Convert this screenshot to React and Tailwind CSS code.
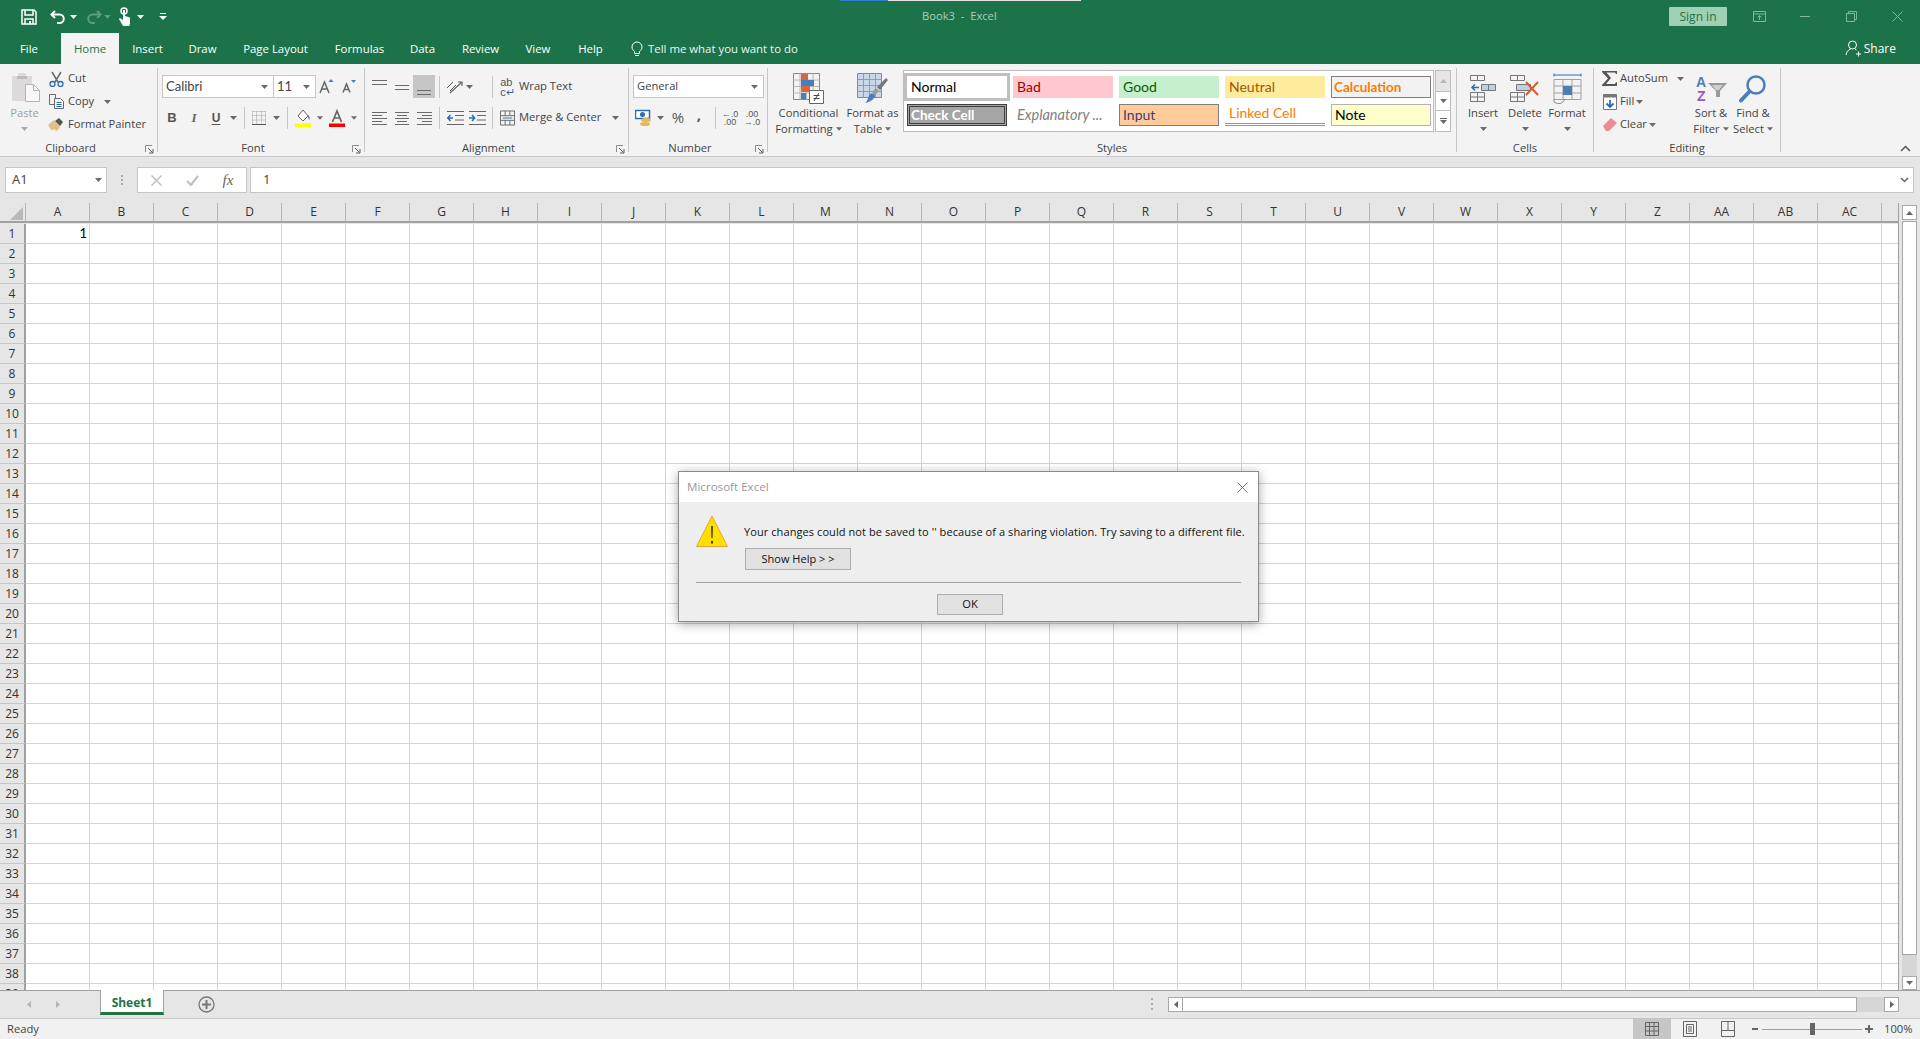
import React from 'react';

const COLUMNS = ['A','B','C','D','E','F','G','H','I','J','K','L','M','N','O','P','Q','R','S','T','U','V','W','X','Y','Z','AA','AB','AC'];
const ROWS = Array.from({ length: 39 }, (_, i) => i + 1);

const Caret = ({ className = 'w-[7px]', color = '#6a6a6a' }) => (
  <span className={`flex justify-center shrink-0 ${className}`}>
    <svg width="7" height="4" viewBox="0 0 7 4"><path d="M0 0h7L3.500 4z" fill={color} /></svg>
  </span>
);

const Cell = ({ className = 'w-[22px]', children }) => (
  <span className={`flex justify-center items-center shrink-0 ${className}`}>{children}</span>
);

const Sep = ({ className = '' }) => <span className={`w-px h-[22px] bg-[#c6c6c6] shrink-0 ${className}`} />;

const Launcher = () => (
  <svg width="9" height="9" viewBox="0 0 9 9" className="absolute right-[3px] top-[5px]">
    <path d="M.5 7V.500H7" fill="none" stroke="#8a8a8a" />
    <path d="M3 3l4.500 4.500M8 4v4H4" fill="none" stroke="#5a5a5a" />
  </svg>
);

const Group = ({ label, className, launcher, children }) => (
  <div className={`relative shrink-0 pt-1 ${className}`}>
    <div className="h-[84px] flex flex-col border-r border-[#c6c6c6]">
      <div className="h-[72px] flex shrink-0">{children}</div>
      <div className={`relative h-[16px] shrink-0 leading-[16px] text-center text-[#444] ${launcher ? 'pr-[16px]' : ''}`}>
        {label}
        {launcher && <Launcher />}
      </div>
    </div>
  </div>
);

const SmallRow = ({ className = '', children }) => <div className={`flex items-center h-[23px] ${className}`}>{children}</div>;

const Big = ({ className = 'w-[42px]', icon, lines, caretInline = true }) => (
  <div className={`flex flex-col items-center shrink-0 ${className}`}>
    <div className="h-[37px] flex items-center justify-center pt-[4px]">{icon}</div>
    {lines.map((l, i) => (
      <div key={i} className="h-[16px] leading-[16px] whitespace-nowrap flex items-center gap-[3px] text-[#444]">
        {l}
        {i === lines.length - 1 && caretInline && <Caret className="w-[6px]" />}
      </div>
    ))}
    {!caretInline && <div className="h-[16px] flex items-center"><Caret /></div>}
  </div>
);

const Select = ({ className, label, font = "font-['Lato',sans-serif] text-[13px]" }) => (
  <div className={`h-[23px] bg-white border border-[#c6c6c6] flex items-center justify-between pl-[3px] pr-[5px] shrink-0 ${className}`}>
    <span className={`text-[#444] ${font}`}>{label}</span>
    <Caret />
  </div>
);

const AlignIcon = ({ rows }) => (
  <svg width="18" height="16" viewBox="0 0 18 16">
    {rows.map(([x1, x2, y], i) => <path key={i} d={`M${x1} ${y + .5}H${x2}`} stroke="#6a6a6a" />)}
  </svg>
);

const StyleCell = ({ className, children }) => (
  <div className={`h-[22px] w-[100px] flex items-center pb-[1px] leading-[16px] font-['Lato',sans-serif] whitespace-nowrap ${className}`}>{children}</div>
);

const TitleBar = () => (
  <div className="relative h-[33px] flex items-center text-white shrink-0">
    <Cell className="w-[22px] ml-[18px]">
      <svg width="16" height="16" viewBox="0 0 16 16" fill="none" stroke="#fff" strokeWidth="1.500">
        <path d="M1 1h12l2 2v12H1z" /><path d="M4 1v5h8V1M4 15v-5h8v5" /><path d="M8 12h2v3H8z" fill="#fff" stroke="none" />
      </svg>
    </Cell>
    <Cell className="w-[18px] ml-[9px]">
      <svg width="16" height="16" viewBox="0 0 16 16" fill="none" stroke="#fff" strokeWidth="2">
        <path d="M5 2L1.500 5.500 5 9" /><path d="M2 5.500h7.500a3.800 3.800 0 0 1 0 8.500H7" />
      </svg>
    </Cell>
    <Caret className="w-[7px] ml-[3px]" color="#fff" />
    <Cell className="w-[18px] ml-[8px]">
      <svg width="16" height="16" viewBox="0 0 16 16" fill="none" stroke="#5c9e7c" strokeWidth="2">
        <path d="M11 2l3.500 3.500L11 9" /><path d="M14 5.500H6.500a3.800 3.800 0 0 0 0 8.500H9" />
      </svg>
    </Cell>
    <Caret className="w-[7px] ml-[1px]" color="#5c9e7c" />
    <Cell className="w-[18px] ml-[5px]">
      <svg width="14" height="20" viewBox="0 0 14 20">
        <circle cx="6" cy="4" r="3" fill="none" stroke="#fff" strokeWidth="1.500" />
        <path d="M5 3h2v6l5 1.500V17l-1 2H5L1 12l1-1 3 2z" fill="#fff" />
      </svg>
    </Cell>
    <Caret className="w-[7px] ml-[3px]" color="#fff" />
    <Cell className="w-[10px] ml-[14px]">
      <svg width="8" height="8" viewBox="0 0 8 8" fill="#fff"><path d="M1 0h6v1H1zM0 3h8L4 7z" /></svg>
    </Cell>
    <div className="absolute left-[840px] top-0 h-[1px] w-[48px] bg-[#2b7cd3]" />
    <div className="absolute left-[888px] top-0 h-[1px] w-[193px] bg-[#e6e6e6]" />
    <span className="ml-[754px] text-[#a9d0bb] whitespace-nowrap">Book3&nbsp; -&nbsp; Excel</span>
    <div className="ml-auto flex items-center">
      <div className="w-[58px] h-[19px] rounded-[1px] bg-[#9fcfb4] text-[#1f7246] text-[12px] flex items-center justify-center mr-[20px]">Sign in</div>
      <Cell className="w-[24px] mr-[22px]">
        <svg width="13" height="11" viewBox="0 0 13 11" fill="none" stroke="#7fb89a"><path d="M.500.500h12v10H.500zM.500 3h12M6.500 9V5M4.500 6.500l2-2 2 2" /></svg>
      </Cell>
      <Cell className="w-[24px] mr-[22px]"><span className="w-[10px] h-px bg-[#7fb89a]" /></Cell>
      <Cell className="w-[24px] mr-[22px]">
        <svg width="11" height="11" viewBox="0 0 11 11" fill="none" stroke="#7fb89a"><path d="M.500 2.500h8v8h-8zM2.500 2.500v-2h8v8h-2" /></svg>
      </Cell>
      <Cell className="w-[24px] mr-[11px]">
        <svg width="11" height="11" viewBox="0 0 11 11" fill="none" stroke="#7fb89a"><path d="M.500.500l10 10M10.500.500l-10 10" /></svg>
      </Cell>
    </div>
  </div>
);

const Tabs = () => {
  const tabs = [['File', 'w-[61px] pr-[3px]'], ['Home', 'w-[58px]'], ['Insert', 'w-[56px] pl-[1px]'], ['Draw', 'w-[54px] pl-[1px]'], ['Page Layout', 'w-[92px] pl-[1px]'], ['Formulas', 'w-[77px]'], ['Data', 'w-[49px]'], ['Review', 'w-[67px]'], ['View', 'w-[48px]'], ['Help', 'w-[57px]']];
  return (
    <div className="h-[31px] flex items-stretch text-white text-[11.400px] shrink-0">
      {tabs.map(([t, w]) => (
        <div key={t} className={`flex items-center justify-center ${w} ${t === 'Home' ? 'bg-[#f3f3f3] text-[#217346]' : ''}`}>{t}</div>
      ))}
      <div className="flex items-center ml-[12px] gap-[5px] text-[#eef6f1]">
        <svg width="12" height="16" viewBox="0 0 12 16" fill="none" stroke="#fff"><path d="M3.500 10.500C2 9 1 8 1 6a5 5 0 0 1 10 0c0 2-1 3-2.500 4.500v2h-5zM4 14.500h4" /></svg>
        <span>Tell me what you want to do</span>
      </div>
      <div className="ml-auto flex items-center mr-[24px]">
        <svg width="17" height="17" viewBox="0 0 17 17" fill="none" stroke="#fff" className="mr-[2px]">
          <circle cx="7.500" cy="5" r="4" /><path d="M1 15c.500-3 2-5 4.500-6M10 9c.500.200 1 .500 1.500.900M11 14h5M13.500 11.500v5" />
        </svg>
        <span className="text-[12px]">Share</span>
      </div>
    </div>
  );
};

const Ribbon = () => (
  <div className="relative h-[93px] bg-[#f3f3f3] border-b border-[#c6c6c6] flex shrink-0 text-[#444]">
    <Group label="Clipboard" className="w-[158px]" launcher>
      <div className="w-[46px] flex flex-col items-center pt-[4px] pl-[3px] text-[#a0a0a0] shrink-0">
        <svg width="30" height="30" viewBox="0 0 30 30" className="ml-[2px]">
          <path d="M1 4h6V1h8v3h6v25H1z" fill="#dcdadb" /><path d="M6 4h10v3H6z" fill="#bdbbbc" />
          <path d="M14.500 12.500h8l6 6v11h-14z" fill="#f8f8f8" stroke="#b4b4b4" /><path d="M22.500 12.500v6h6" fill="none" stroke="#b4b4b4" />
        </svg>
        <div className="h-[16px] leading-[16px] mt-[3px]">Paste</div>
        <div className="h-[16px] flex items-center"><Caret color="#a8a8a8" /></div>
      </div>
      <div className="flex flex-col -mt-px">
        <SmallRow>
          <Cell className="w-[20px]">
            <svg width="15" height="16" viewBox="0 0 15 16" fill="none"><path d="M3 1l6 10M12 1L6 11" stroke="#6a6a6a" strokeWidth="1.500" /><circle cx="3.500" cy="13" r="2.500" stroke="#2b6cb0" strokeWidth="1.300" /><circle cx="11.500" cy="13" r="2.500" stroke="#2b6cb0" strokeWidth="1.300" /></svg>
          </Cell>
          <span className="ml-[2px]">Cut</span>
        </SmallRow>
        <SmallRow>
          <Cell className="w-[20px]">
            <svg width="15" height="15" viewBox="0 0 15 15" fill="none" stroke="#6a6a6a"><path d="M.500.500h6v10h-6z" /><path d="M5.500 4.500h6l3 3v7h-9z" fill="#f3f3f3" /><path d="M7.500 8.500h5M7.500 10.500h5M7.500 12.500h5" stroke="#2b6cb0" /></svg>
          </Cell>
          <span className="ml-[2px]">Copy</span>
          <Caret className="w-[7px] ml-[10px]" />
        </SmallRow>
        <SmallRow>
          <Cell className="w-[20px]">
            <svg width="16" height="15" viewBox="0 0 16 15"><path d="M0 8l6-5 6 7-3 4-4-2-1 2z" fill="#e3bd85" /><path d="M7 4l4-3 4 4-3 4z" fill="#555" /></svg>
          </Cell>
          <span className="ml-[2px] whitespace-nowrap">Format Painter</span>
        </SmallRow>
      </div>
    </Group>

    <Group label="Font" className="w-[207px]" launcher>
      <div className="flex flex-col pt-[7px]">
        <div className="flex items-center ml-[4px]">
          <Select className="w-[112px]" label="Calibri" />
          <Select className="w-[43px] -ml-px" label="11" />
          <Cell className="w-[20px] ml-[1px]">
            <svg width="16" height="15" viewBox="0 0 16 15"><path d="M1 14L5.500 3 10 14M2.800 10h5.400" fill="none" stroke="#666" strokeWidth="1.500" /><path d="M9.500 3L12 0l2.500 3z" fill="#4a7ebb" /></svg>
          </Cell>
          <Cell className="w-[22px] ml-[1px]">
            <svg width="15" height="13" viewBox="0 0 15 13"><path d="M1 12.500L4.500 4 8 12.500M2.500 9.500h4" fill="none" stroke="#666" strokeWidth="1.500" /><path d="M9 0h5l-2.500 3z" fill="#4a7ebb" /></svg>
          </Cell>
        </div>
        <div className="flex items-center h-[23px] mt-[8px] ml-[3px]">
          <Cell><span className="font-bold font-['Liberation_Sans',sans-serif] text-[13px] text-[#555]">B</span></Cell>
          <Cell><span className="italic font-bold font-['Liberation_Serif',serif] text-[13px] text-[#666]">I</span></Cell>
          <Cell><span className="font-bold underline underline-offset-2 font-['Liberation_Sans',sans-serif] text-[12px] text-[#555]">U</span></Cell>
          <Caret className="w-[12px]" />
          <Sep className="ml-[5px]" />
          <Cell className="w-[28px]">
            <svg width="14" height="14" viewBox="0 0 14 14" fill="none"><path d="M.500.500h13M.500 4.500h13M.500 9h13M.500.500v13M4.500.500v13M9.500.500v13M13.500.500v13" stroke="#a0a0a0" strokeDasharray="1 1" /><path d="M0 13.500h14" stroke="#555" /></svg>
          </Cell>
          <Caret />
          <Sep className="ml-[7px]" />
          <Cell className="w-[28px] ml-[1px]">
            <svg width="16" height="18" viewBox="0 0 16 18"><path d="M3 7l5-6 5 6-5 5z" fill="#fff" stroke="#666" /><path d="M13 6c1.500 1 2 3 1.500 5-1-1-1.500-3-1.500-5z" fill="#2b6cb0" /><path d="M0 14.500h16V18H0z" fill="#ffff00" /></svg>
          </Cell>
          <Caret className="w-[6px]" />
          <Cell className="w-[28px]">
            <svg width="16" height="18" viewBox="0 0 16 18"><path d="M3.500 13L8 2l4.500 11M5.200 9h5.600" fill="none" stroke="#666" strokeWidth="1.700" /><path d="M0 14.500h16V18H0z" fill="#ff0000" /></svg>
          </Cell>
          <Caret className="w-[6px]" />
        </div>
      </div>
    </Group>

    <Group label="Alignment" className="w-[264px]" launcher>
      <div className="flex flex-col pt-[7px] pl-[4px]">
        <div className="flex items-center h-[23px]">
          <Cell><AlignIcon rows={[[1, 16, 1], [1, 16, 5]]} /></Cell>
          <Cell><AlignIcon rows={[[2, 16, 6], [2, 16, 10]]} /></Cell>
          <Cell className="w-[22px] h-[23px] bg-[#c6c6c6]"><span className="pt-[3px]"><AlignIcon rows={[[2, 16, 10], [2, 16, 14]]} /></span></Cell>
          <Sep className="ml-[4px]" />
          <Cell className="w-[22px] ml-[4px]">
            <svg width="18" height="16" viewBox="0 0 18 16" fill="none" stroke="#555"><path d="M1 9l6-6M4 12l6-6" /><path d="M4 14L16 3M12 3h4v4" stroke="#666" strokeWidth="1.200" /></svg>
          </Cell>
          <Caret />
          <Sep className="ml-[19px]" />
          <Cell className="w-[15px] ml-[7px]">
            <span className="text-[11px] leading-[10px] text-[#555] font-['Liberation_Sans',sans-serif]">ab<br />c<span className="text-[#2b6cb0]">↵</span></span>
          </Cell>
          <span className="ml-[4px] whitespace-nowrap">Wrap Text</span>
        </div>
        <div className="flex items-center h-[23px] mt-[8px]">
          <Cell><AlignIcon rows={[[1, 16, 2], [1, 11, 5], [1, 16, 8], [1, 11, 11], [1, 16, 14]]} /></Cell>
          <Cell><AlignIcon rows={[[2, 16, 2], [4, 14, 5], [2, 16, 8], [4, 14, 11], [2, 16, 14]]} /></Cell>
          <Cell><AlignIcon rows={[[2, 17, 2], [7, 17, 5], [2, 17, 8], [7, 17, 11], [2, 17, 14]]} /></Cell>
          <Sep className="ml-[4px]" />
          <Cell className="w-[22px] ml-[4px]">
            <svg width="17" height="14" viewBox="0 0 17 14" fill="none"><path d="M0 .500h17M8 4.500h9M8 9h9M0 13.500h17" stroke="#666" /><path d="M6 7H1M3.500 4L.800 7l2.700 3" stroke="#2b6cb0" strokeWidth="1.500" /></svg>
          </Cell>
          <Cell>
            <svg width="17" height="14" viewBox="0 0 17 14" fill="none"><path d="M0 .500h17M8 4.500h9M8 9h9M0 13.500h17" stroke="#666" /><path d="M0 7h5M3 4l2.700 3L3 10" stroke="#2b6cb0" strokeWidth="1.500" /></svg>
          </Cell>
          <Sep className="ml-[4px]" />
          <Cell className="w-[15px] ml-[7px]">
            <svg width="16" height="16" viewBox="0 0 16 16" fill="none" stroke="#666"><path d="M.500.500h15v15H.500zM.500 5.500h15M.500 10.500h15M5.500 .500v5M10.500 .500v5M5.500 10.500v5M10.500 10.500v5" /><path d="M3 8h10" stroke="#2b6cb0" /></svg>
          </Cell>
          <span className="ml-[4px] w-[93px] whitespace-nowrap">Merge &amp; Center</span>
          <Caret />
        </div>
      </div>
    </Group>

    <Group label="Number" className="w-[139px]" launcher>
      <div className="flex flex-col pt-[7px] pl-[4px]">
        <Select className="w-[131px]" label="General" font="text-[11.200px]" />
        <div className="flex items-center h-[23px] mt-[8px]">
          <Cell>
            <svg width="18" height="18" viewBox="0 0 18 18"><path d="M.500 1.500h14v8H.500z" fill="#fff" stroke="#2b6cb0" strokeWidth="1.500" /><circle cx="7.500" cy="5.500" r="2.500" fill="#2b6cb0" /><ellipse cx="11" cy="11" rx="5" ry="2" fill="#e8b85a" /><ellipse cx="10" cy="15" rx="5" ry="2" fill="#e8b85a" /></svg>
          </Cell>
          <Caret className="w-[10px]" />
          <Cell className="w-[26px]"><span className="text-[15px] text-[#555]">%</span></Cell>
          <Cell className="w-[16px]"><span className="text-[15px] font-bold text-[#555] leading-none -mt-[7px]">,</span></Cell>
          <Sep className="ml-[8px]" />
          <Cell className="w-[22px] ml-[3px]">
            <span className="text-[9px] leading-[8px] text-center text-[#555] font-['Liberation_Sans',sans-serif]"><span className="text-[#2b6cb0] font-bold">←</span>.0<br />.00</span>
          </Cell>
          <Cell>
            <span className="text-[9px] leading-[8px] text-center text-[#555] font-['Liberation_Sans',sans-serif]">.00<br /><span className="text-[#2b6cb0] font-bold">→</span>.0</span>
          </Cell>
        </div>
      </div>
    </Group>

    <Group label="Styles" className="w-[689px]">
      <Big
        className="w-[63px] ml-[9px]"
        lines={['Conditional', 'Formatting']}
        icon={
          <svg width="31" height="31" viewBox="0 0 31 31" fill="none">
            <path d="M.500.500h26v26H.500z" stroke="#888" /><path d="M.500 7h26M.500 13.500h26M.500 20h26M7 .500v26M13.500 .500v26M20 .500v26" stroke="#b8b8b8" />
            <path d="M8 1h7v6H8z" fill="#d9663a" /><path d="M8 7h13v6H8z" fill="#4a7ebb" /><path d="M8 13h9v6H8z" fill="#d9663a" /><path d="M8 20h5v6H8z" fill="#4a7ebb" />
            <path d="M16.500 17.500h14v13h-14z" fill="#fff" stroke="#666" /><path d="M20.500 22.500h6M20.500 25.500h6M26 20l-5 8" stroke="#444" />
          </svg>
        }
      />
      <Big
        className="w-[61px] ml-[2px]"
        lines={['Format as', 'Table']}
        icon={
          <svg width="31" height="31" viewBox="0 0 31 31" fill="none">
            <path d="M.500.500h24v24H.500z" fill="#c9d7ea" stroke="#888" /><path d="M.500 6.500h24M.500 12.500h24M.500 18.500h24M6.500 .500v24M12.500 .500v24M18.500 .500v24" stroke="#9a9a9a" />
            <path d="M15 19l4-4 3 3-4 4z" fill="#999" /><path d="M20 14l9-9 2 2-8 10z" fill="#777" /><path d="M13 21c3-1 5 0 5 2s-4 6-10 7c3-2 3-6 5-9z" fill="#4a7ebb" />
          </svg>
        }
      />
      <div className="w-[531px] h-[62px] mt-[2px] border border-[#bdbdbd] bg-white pt-[5px] pl-[3px] grid grid-cols-[repeat(5,100px)] grid-rows-[22px_22px] gap-[6px] shrink-0">
        <StyleCell className="pl-[4px] text-[14px] bg-white text-black ring-[3px] ring-[#bfbfbf]">Normal</StyleCell>
        <StyleCell className="pl-[4px] text-[14px] bg-[#ffc7ce] text-[#9c0006]">Bad</StyleCell>
        <StyleCell className="pl-[4px] text-[14px] bg-[#c6efce] text-[#006100]">Good</StyleCell>
        <StyleCell className="pl-[4px] text-[14px] bg-[#ffeb9c] text-[#9c5700]">Neutral</StyleCell>
        <StyleCell className="pl-[2px] text-[13.500px] bg-[#f2f2f2] text-[#fa7d00] font-bold border border-[#7f7f7f]">Calculation</StyleCell>
        <StyleCell className="pl-[1px] text-[13.500px] bg-[#a5a5a5] text-white font-bold border-[3px] border-double border-[#3f3f3f]">Check Cell</StyleCell>
        <StyleCell className="pl-[4px] text-[14.500px] text-[#7f7f7f] italic">Explanatory ...</StyleCell>
        <StyleCell className="pl-[3px] text-[14px] bg-[#ffcc99] text-[#3f3f76] border border-[#7f7f7f]">Input</StyleCell>
        <StyleCell className="pl-[4px] text-[14px] text-[#fa7d00] border-b-[3px] border-double border-[#ff8001]">Linked Cell</StyleCell>
        <StyleCell className="pl-[3px] text-[14px] bg-[#ffffcc] text-black border border-[#b2b2b2]">Note</StyleCell>
      </div>
      <div className="w-[16px] h-[62px] mt-[2px] ml-px flex flex-col border border-[#bdbdbd] shrink-0">
        <div className="h-[21px] bg-[#e6e6e6] flex items-center justify-center border-b border-[#bdbdbd]">
          <svg width="7" height="4" viewBox="0 0 7 4"><path d="M0 4h7L3.500 0z" fill="#b4b4b4" /></svg>
        </div>
        <div className="h-[19px] bg-white flex items-center justify-center border-b border-[#bdbdbd]"><Caret /></div>
        <div className="flex-1 bg-white flex flex-col items-center justify-center gap-[1px]"><span className="w-[7px] h-px bg-[#6a6a6a]" /><Caret /></div>
      </div>
    </Group>

    <Group label="Cells" className="w-[137px]">
      <div className="flex ml-[5px]">
        <Big
          lines={['Insert']}
          caretInline={false}
          icon={
            <svg width="27" height="28" viewBox="0 0 27 28" fill="none" stroke="#777">
              <path d="M.500.500h14v5H.500zM7.500 .500v5M.500 17.500h14v9H.500zM.500 22h14M7.500 17.500v9" />
              <path d="M11.500 9.500h14v6h-14zM18.500 9.500v6" fill="#bcd0e8" stroke="#777" /><path d="M9 12.500H2M5 9.500l-3 3 3 3" stroke="#2b6cb0" strokeWidth="1.500" />
            </svg>
          }
        />
        <Big
          lines={['Delete']}
          caretInline={false}
          icon={
            <svg width="30" height="28" viewBox="0 0 30 28" fill="none" stroke="#777">
              <path d="M.500.500h14v5H.500zM7.500 .500v5M.500 17.500h14v9H.500zM.500 22h14M7.500 17.500v9" />
              <path d="M6.500 9.500h14v6h-14z" fill="#bcd0e8" /><path d="M16 7l12 13M28 7L16 20" stroke="#e05a2c" strokeWidth="2" />
            </svg>
          }
        />
        <Big
          lines={['Format']}
          caretInline={false}
          icon={
            <svg width="29" height="31" viewBox="0 0 29 31" fill="none">
              <path d="M1 2h27M1 .500v3M28 .500v3" stroke="#2b6cb0" />
              <path d="M1 6.500h27v20H1zM1 13h27M1 20h27M10 6.500v20M19 6.500v20" stroke="#a0a0a0" />
              <path d="M10 13h9v9h-9z" fill="#4a7ebb" /><path d="M1 26v3c3 2 7 2 9 0l2-3" stroke="#888" />
            </svg>
          }
        />
      </div>
    </Group>

    <Group label="Editing" className="w-[187px]">
      <div className="flex flex-col ml-[7px] -mt-px w-[89px] shrink-0">
        <SmallRow>
          <Cell className="w-[17px]">
            <svg width="16" height="15" viewBox="0 0 16 15"><path d="M1 0h14v3h-1l-1-1.500H4.500L9 7 4 13h9l1-1.800h1V15H0v-1l6-6.500L0 1V0z" fill="#555" /></svg>
          </Cell>
          <span className="ml-[2px]">AutoSum</span>
          <Caret className="w-[7px] ml-[9px]" />
        </SmallRow>
        <SmallRow>
          <Cell className="w-[17px]">
            <svg width="14" height="16" viewBox="0 0 14 16" fill="none"><path d="M.500.500h13v15H.500z" fill="#fff" stroke="#777" /><path d="M.500.500h13v3H.500z" fill="#777" /><path d="M7 6v7M3.500 9.500L7 13l3.500-3.500" stroke="#2b6cb0" strokeWidth="1.800" /></svg>
          </Cell>
          <span className="ml-[2px]">Fill</span>
          <Caret className="w-[7px] ml-[2px]" />
        </SmallRow>
        <SmallRow>
          <Cell className="w-[17px]">
            <svg width="14" height="13" viewBox="0 0 14 13"><path d="M0 8l8-8 6 5-8 8H3z" fill="#ec8a98" /></svg>
          </Cell>
          <span className="ml-[2px]">Clear</span>
          <Caret className="w-[7px] ml-[2px]" />
        </SmallRow>
      </div>
      <Big
        lines={['Sort &', 'Filter']}
        icon={
          <svg width="31" height="27" viewBox="0 0 31 27">
            <text x="0" y="12" fontSize="14" fontWeight="700" fill="#4a7ebb" fontFamily="Liberation Sans">A</text>
            <text x="1" y="26" fontSize="14" fontWeight="700" fill="#9b59b6" fontFamily="Liberation Sans">Z</text>
            <path d="M12 8h19l-7 8v6h-4v-6z" fill="#9a9a9a" /><path d="M16 10h11l-4 5h-3z" fill="#cfcfcf" />
          </svg>
        }
      />
      <Big
        lines={['Find &', 'Select']}
        icon={
          <svg width="28" height="28" viewBox="0 0 28 28" fill="none" stroke="#4a7ebb">
            <circle cx="17" cy="10" r="8.500" strokeWidth="2.500" /><path d="M10.500 16.500L2 25.500" strokeWidth="4" strokeLinecap="round" />
          </svg>
        }
      />
    </Group>
    <svg width="11" height="7" viewBox="0 0 11 7" fill="none" stroke="#555" strokeWidth="1.500" className="absolute right-[9px] bottom-[4px]"><path d="M1 6l4.500-4.500L10 6" /></svg>
  </div>
);

const FormulaBar = () => (
  <div className="h-[46px] bg-[#e6e6e6] flex items-start pt-[10px] shrink-0 text-[#444]">
    <div className="ml-[5px] w-[102px] h-[26px] bg-white border border-[#c6c6c6] flex items-center justify-between pl-[6px] pr-[4px]">
      <span className="text-[13px]">A1</span>
      <Caret />
    </div>
    <Cell className="w-[30px] h-[26px]">
      <span className="flex flex-col gap-[2px]"><span className="w-[2px] h-[2px] bg-[#aaa]" /><span className="w-[2px] h-[2px] bg-[#aaa]" /><span className="w-[2px] h-[2px] bg-[#aaa]" /></span>
    </Cell>
    <div className="w-[110px] h-[26px] bg-white border border-[#c6c6c6] flex items-center">
      <Cell className="w-[36px]">
        <svg width="11" height="11" viewBox="0 0 11 11" fill="none" stroke="#c0c0c0" strokeWidth="1.500"><path d="M.500.500l10 10M10.500.500l-10 10" /></svg>
      </Cell>
      <Cell className="w-[36px]">
        <svg width="13" height="11" viewBox="0 0 13 11" fill="none" stroke="#c0c0c0" strokeWidth="2.200"><path d="M1 6l4 4 7-9" /></svg>
      </Cell>
      <Cell className="w-[36px]"><span className="italic font-['Liberation_Serif',serif] text-[15px] text-[#666]">fx</span></Cell>
    </div>
    <div className="ml-[3px] mr-[6px] flex-1 h-[26px] bg-white border border-[#c6c6c6] flex items-center justify-between pl-[12px] pr-[4px]">
      <span className="text-[13px]">1</span>
      <svg width="9" height="6" viewBox="0 0 9 6" fill="none" stroke="#666" strokeWidth="1.500"><path d="M1 1l3.500 3.500L8 1" /></svg>
    </div>
  </div>
);

const Sheet = () => (
  <div className="flex-1 min-h-0 flex bg-[#e6e6e6] text-[12px]">
    <div className="w-[1899px] overflow-hidden border-r border-[#a0a0a0] shrink-0">
      <div className="flex h-[20px] border-b-2 border-[#a0a0a0] text-[#333]">
        <div className="w-[26px] shrink-0 border-r border-[#b4b4b4] flex items-end justify-end pr-[2px] pb-[1px]">
          <svg width="13" height="13" viewBox="0 0 13 13"><path d="M13 0v13H0z" fill="#b9b9b9" /></svg>
        </div>
        {COLUMNS.map((c) => (
          <div key={c} className="w-[64px] shrink-0 border-r border-[#b4b4b4] flex items-center justify-center">{c}</div>
        ))}
      </div>
      <div className="h-px" />
      {ROWS.map((r) => (
        <div key={r} className="flex h-[20px]">
          <div className="w-[26px] shrink-0 bg-[#e6e6e6] border-r-2 border-b border-r-[#a0a0a0] border-b-[#c6c6c6] flex items-center justify-center text-[#333]">{r}</div>
          <div className="flex flex-1 bg-white">
            {COLUMNS.map((c) => (
              <div key={c} className="w-[64px] shrink-0 border-r border-b border-[#d4d4d4] flex items-center justify-end pr-[2px] text-[13px] text-black font-['Lato',sans-serif]">
                {r === 1 && c === 'A' ? '1' : ''}
              </div>
            ))}
            <div className="flex-1 border-b border-[#d4d4d4]" />
          </div>
        </div>
      ))}
    </div>
    <div className="flex-1 flex flex-col items-center pt-[2px]">
      <div className="w-[15px] h-[15px] bg-white border border-[#a8a8a8] flex items-center justify-center shrink-0">
        <svg width="7" height="4" viewBox="0 0 7 4"><path d="M0 4h7L3.500 0z" fill="#666" /></svg>
      </div>
      <div className="w-[15px] h-[734px] mt-[1px] bg-white border border-[#a8a8a8] shrink-0" />
      <div className="w-[15px] flex-1 bg-[#d6d6d6]" />
      <div className="w-[15px] h-[14px] bg-white border border-[#a8a8a8] flex items-center justify-center shrink-0"><Caret /></div>
    </div>
  </div>
);

const SheetTabs = () => (
  <div className="h-[29px] bg-[#e6e6e6] border-t border-b border-t-[#a0a0a0] border-b-[#c6c6c6] flex shrink-0">
    <Cell className="w-[10px] h-[26px] ml-[24px]"><svg width="4" height="7" viewBox="0 0 4 7"><path d="M4 0v7L0 3.500z" fill="#b4b4b4" /></svg></Cell>
    <Cell className="w-[10px] h-[26px] ml-[19px]"><svg width="4" height="7" viewBox="0 0 4 7"><path d="M0 0v7l4-3.500z" fill="#b4b4b4" /></svg></Cell>
    <div className="ml-[37px] -mt-px w-[64px] h-[25px] pt-[3px] bg-white border-x border-[#a0a0a0] border-b-[3px] border-b-[#217346] flex items-center justify-center font-bold text-[12px] text-[#217346]">Sheet1</div>
    <Cell className="w-[18px] h-[26px] ml-[33px]">
      <svg width="17" height="17" viewBox="0 0 17 17" fill="none" stroke="#777"><circle cx="8.500" cy="8.500" r="7.500" strokeWidth="1.300" /><path d="M8.500 4v9M4 8.500h9" strokeWidth="2" /></svg>
    </Cell>
    <Cell className="w-[4px] h-[26px] ml-[935px]">
      <span className="flex flex-col gap-[3px]"><span className="w-[2px] h-[2px] bg-[#aaa]" /><span className="w-[2px] h-[2px] bg-[#aaa]" /><span className="w-[2px] h-[2px] bg-[#aaa]" /></span>
    </Cell>
    <div className="ml-[14px] mt-[6px] h-[15px] flex">
      <Cell className="w-[15px] h-[15px] bg-white border border-[#a8a8a8]"><svg width="4" height="7" viewBox="0 0 4 7"><path d="M4 0v7L0 3.500z" fill="#666" /></svg></Cell>
      <div className="w-[674px] bg-white border-y border-r border-[#a8a8a8]" />
      <div className="w-[27px] bg-[#d6d6d6]" />
      <Cell className="w-[15px] h-[15px] bg-white border border-[#a8a8a8]"><svg width="4" height="7" viewBox="0 0 4 7"><path d="M0 0v7l4-3.500z" fill="#666" /></svg></Cell>
    </div>
  </div>
);

const StatusBar = () => (
  <div className="h-[20px] bg-[#f1f1f1] flex items-center shrink-0 text-[#444]">
    <span className="ml-[7px]">Ready</span>
    <div className="ml-auto flex items-center h-full">
      <Cell className="w-[38px] h-full bg-[#c6c6c6]">
        <svg width="14" height="14" viewBox="0 0 14 14" fill="none" stroke="#666"><path d="M.500.500h13v13H.500zM.500 4.500h13M.500 9h13M4.500 .500v13M9 .500v13" /></svg>
      </Cell>
      <Cell className="w-[38px] h-full">
        <svg width="14" height="16" viewBox="0 0 14 16" fill="none" stroke="#666"><path d="M.500.500h13v15H.500zM3.500 3.500h7v9h-7zM5 6h4M5 8h4M5 10h4" /></svg>
      </Cell>
      <Cell className="w-[38px] h-full">
        <svg width="14" height="16" viewBox="0 0 14 16" fill="none" stroke="#666"><path d="M.500.500h13v15H.500zM.500 9.500h13M7 .500v9" /></svg>
      </Cell>
      <span className="ml-[5px] w-[6px] h-[2px] bg-[#666]" />
      <div className="relative ml-[4px] w-[100px] h-[1px] bg-[#a0a0a0]">
        <span className="absolute left-[48px] -top-[6px] w-[5px] h-[12px] bg-[#666]" />
      </div>
      <svg width="8" height="8" viewBox="0 0 8 8" className="ml-[3px]"><path d="M3 0h2v3h3v2H5v3H3V5H0V3h3z" fill="#666" /></svg>
      <span className="ml-[11px] mr-[8px] w-[28px]">100%</span>
    </div>
  </div>
);

const Dialog = () => (
  <div className="absolute left-[678px] top-[471px] w-[581px] h-[151px] bg-[#eeeeee] border border-[#8a8a8a] shadow-[0_2px_10px_rgba(0,0,0,0.35)] text-[#111]">
    <div className="h-[30px] bg-white flex items-center justify-between pl-[8px] pr-[10px]">
      <span className="text-[11.600px] text-[#999]">Microsoft Excel</span>
      <svg width="11" height="11" viewBox="0 0 11 11" fill="none" stroke="#777"><path d="M.500.500l10 10M10.500.500l-10 10" /></svg>
    </div>
    <div className="flex pl-[17px] pt-[13px]">
      <svg width="32" height="32" viewBox="0 0 32 32" className="shrink-0">
        <path d="M16 1L31.500 31.500H.500z" fill="#ffdf00" stroke="#e3a63c" strokeLinejoin="round" />
        <path d="M15.300 11h1.400l-.2 12h-1zM15.200 26h1.600v2.500h-1.600z" fill="#111" />
      </svg>
      <div className="ml-[16px]">
        <div className="h-[22px] mt-[6px] flex items-center whitespace-nowrap text-[11px] tracking-[0.08px]">Your changes could not be saved to '' because of a sharing violation. Try saving to a different file.</div>
        <button className="ml-[1px] mt-[5px] w-[106px] h-[22px] bg-[#e1e1e1] border border-[#adadad] flex items-center justify-center text-[11px]">Show Help &gt; &gt;</button>
      </div>
    </div>
    <div className="mx-[17px] mt-[12px] h-px bg-[#a0a0a0]" />
    <div className="flex justify-center pt-[11px] pl-[3px]">
      <button className="w-[66px] h-[21px] bg-[#e1e1e1] border border-[#adadad] flex items-center justify-center">OK</button>
    </div>
  </div>
);

export default function App() {
  return (
    <div className="relative h-screen w-full overflow-hidden flex flex-col bg-[#1c7349] text-[11.200px] font-['Open_Sans',sans-serif]">
      <TitleBar />
      <Tabs />
      <Ribbon />
      <FormulaBar />
      <Sheet />
      <SheetTabs />
      <StatusBar />
      <Dialog />
    </div>
  );
}
